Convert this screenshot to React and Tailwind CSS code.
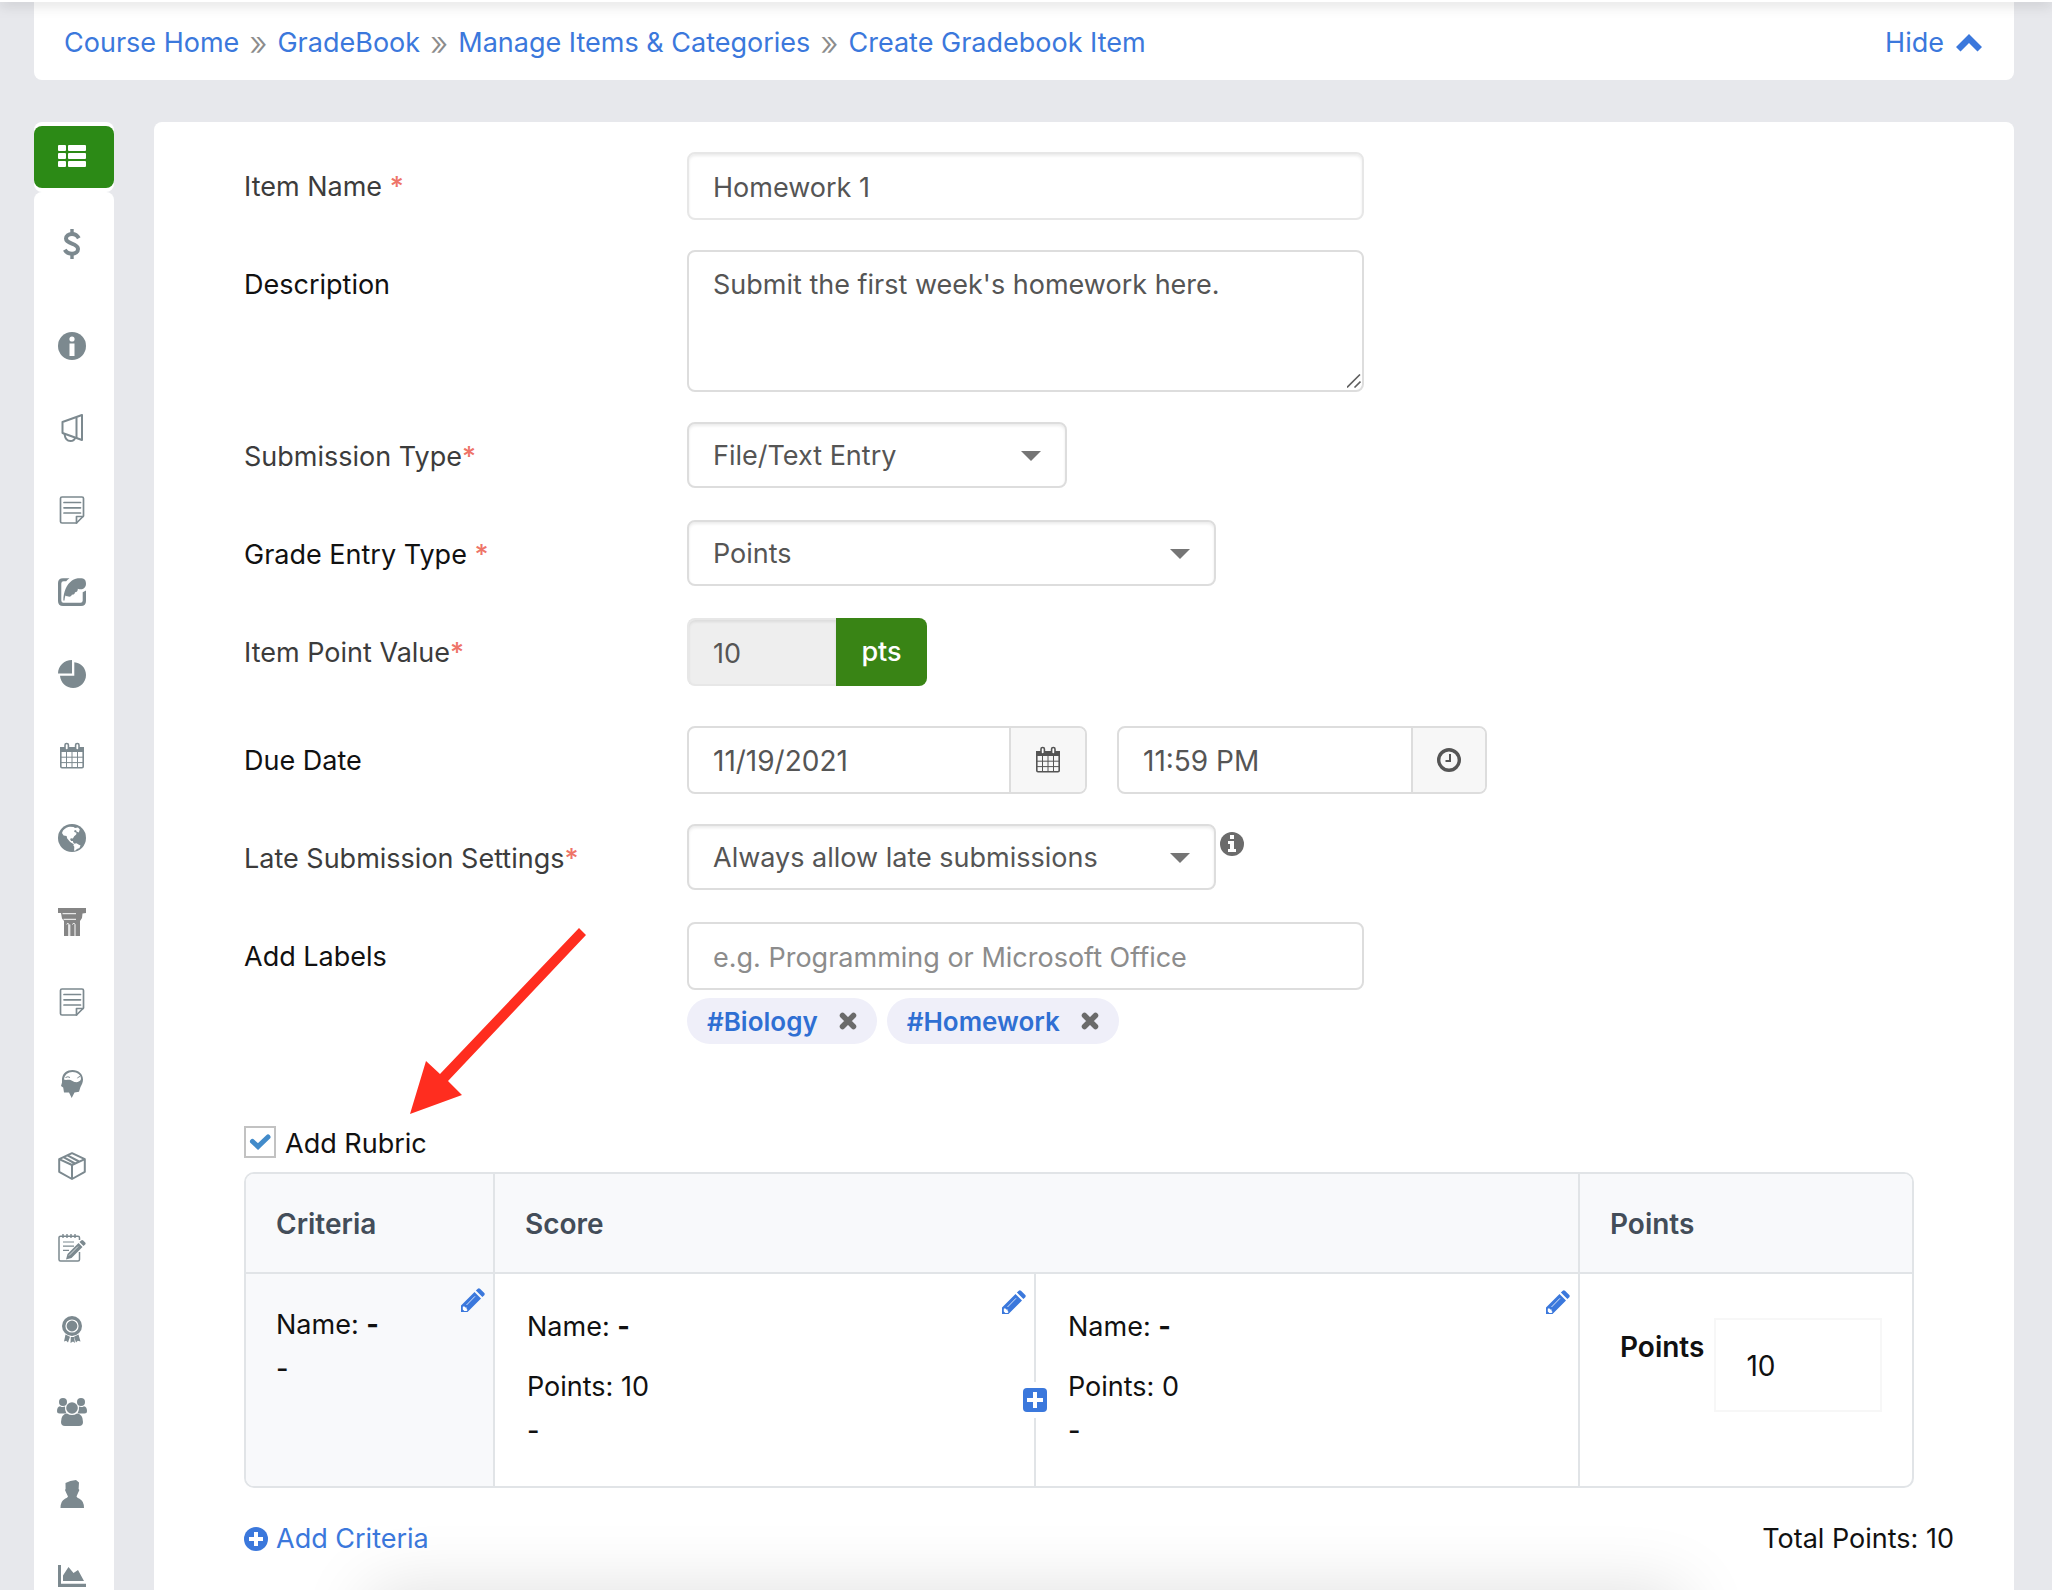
/* Iconos de la barra lateral, todos en una caja de 28x28 */
function GridIcon() {
  return (
    <svg viewBox="0 0 28 24" className="h-6 w-7 fill-white">
      <rect x="0" y="0" width="8" height="6" rx="1" />
      <rect x="10" y="0" width="18" height="6" rx="1" />
      <rect x="0" y="8" width="8" height="6" rx="1" />
      <rect x="10" y="8" width="18" height="6" rx="1" />
      <rect x="0" y="16" width="8" height="6" rx="1" />
      <rect x="10" y="16" width="18" height="6" rx="1" />
    </svg>
  );
}

function DollarIcon() {
  return (
    <svg viewBox="0 0 28 30" className="h-[30px] w-7" fill="none" stroke="currentColor" strokeWidth="4">
      <path d="M14 0v5M14 25v5" strokeWidth="3.400" />
      <path d="M20.800 9.200C19.400 6.600 17 5 14 5c-3.600 0-6 1.800-6 4.600 0 6 12 4 12 10.400 0 3-2.600 4.800-6 4.800-3.200 0-5.800-1.400-7.200-4" />
    </svg>
  );
}

function InfoIcon() {
  return (
    <svg viewBox="0 0 28 28" className="size-7" fill="currentColor">
      <circle cx="14" cy="14" r="14" />
      <circle cx="14" cy="7" r="2.600" fill="#fff" />
      <path d="M11.500 11.500h5v12.500h-5z" fill="#fff" />
    </svg>
  );
}

function MegaphoneIcon() {
  return (
    <svg viewBox="0 0 28 28" className="size-7" fill="none" stroke="currentColor" strokeWidth="2" strokeLinejoin="round">
      <path d="M24 1v25L4.500 19V8z" />
      <path d="M18.500 3.400v20.600" />
      <path d="M6.500 19.800c.6 4.600 2.600 7.200 6 7.200 2.600 0 4.200-1.400 4.900-3.500" />
    </svg>
  );
}

function NoteIcon() {
  return (
    <svg viewBox="0 0 28 28" className="size-7" fill="none" stroke="currentColor" strokeWidth="1.700" strokeLinejoin="round" strokeLinecap="round">
      <path d="M4 1h20q1.500 0 1.500 1.500V20l-7 7H4q-1.500 0-1.500-1.500v-23Q2.500 1 4 1z" />
      <path d="M25 20.500h-6.500V27" />
      <path d="M6 6.500h16.500M6 11.800h16.500M6 17h16.500" />
    </svg>
  );
}

function QuillIcon() {
  return (
    <svg viewBox="0 0 28 28" className="size-7" fill="currentColor">
      <path d="M11.500.3C10 1.200 9 2.200 8.200 3.300H5.500Q3.300 3.300 3.300 5.500v17Q3.300 24.700 5.500 24.700h17q2.200 0 2.200-2.200v-8.300l3.300-1.700V23q0 5-5 5H5q-5 0-5-5V5Q0 .3 5 .3z" />
      <path d="M5.300 22.500C5.500 14 8.500 6.500 14 2.500 17 .4 21 0 25 .5c2 .6 3 2.500 3 5.500 0 2.500-1.500 4.500-4 5.200-1.500.3-3 0-4.200-.5.2 2-.8 3.300-2.800 3.500-.2 1.800-1.200 2.600-3 2.400-.4 1.600-2 2.600-4.500 1.700-1 0-1.500-.6-2-.8-.7 1.500-.8 3.500-1 5z" />
    </svg>
  );
}

function PieIcon() {
  return (
    <svg viewBox="0 0 28 28" className="size-7" fill="currentColor">
      <path d="M14 0v13.500H0C0 6 6 0 14 0z" />
      <path d="M16.300 2.200C23 2.800 28 8 28 15c0 7.200-5.800 13-12.800 13C8.200 28 2.500 22.800 2 15.800h14.300z" />
    </svg>
  );
}

function CalendarIcon() {
  return (
    <svg viewBox="0 0 28 28" className="size-7" fill="none" stroke="currentColor">
      <rect x="2.800" y="5.800" width="22.400" height="20" rx="1.200" strokeWidth="1.600" />
      <path d="M2 5h24v5H2z" fill="currentColor" stroke="none" />
      <rect x="7" y="1.500" width="3.400" height="6.500" rx="1.600" fill="#fff" strokeWidth="1.600" />
      <rect x="17.600" y="1.500" width="3.400" height="6.500" rx="1.600" fill="#fff" strokeWidth="1.600" />
      <path d="M8.500 10v16M14 10v16M19.500 10v16M3 15.200h22M3 20.600h22" />
    </svg>
  );
}

function GlobeIcon() {
  return (
    <svg viewBox="0 0 28 28" className="size-7" fill="currentColor">
      <circle cx="14" cy="14" r="14" />
      <path fill="#fff" d="M5 6.500C7 4.200 9.800 3 12 2.800l3.500.2 1.500 1 3-.6 1.800 2.200-1 3-2.300-1-.5-1.500-2 .6.500 1.300 2 .8-.3 1.800-2 1.600-1.300 2.300-2-.2-.8 1 1 1.600 1.700.1.600 1.800 1 1.300-1-.1-3.200-2-3-3.500-.6-2.500-3-.6L4 9z" />
      <path fill="#fff" d="M16 19.800l2.500-.6 2 1.200 2 1-1 2.500-2.500 1-2.200 2-.7-.6.200-3.500-1-1.500z" />
    </svg>
  );
}

function PillarIcon() {
  return (
    <svg viewBox="0 0 28 28" className="size-7 text-[#858585]" fill="currentColor">
      <path d="M0 0h28v5l-3.500.5L24 10l-2 3v15H6V13l-2-2.500L3 5H0z" />
      <path d="M4.500 5.700H18M5.500 11.300H18M10.800 28V16.500c0-1.400-2-1.400-2 0M11.800 28V16.500M17 28V16.500c0-1.400-2.500-1.400-2.500 0" fill="none" stroke="#fff" />
    </svg>
  );
}

function HeadIcon() {
  return (
    <svg viewBox="0 0 28 28" className="size-7" fill="currentColor">
      <path d="M4 9C4.500 3 9 0 14.500 0 20.500 0 25 4 25 9.500c0 3-1.200 5-2.500 7.500l-1.500 4.800-4.500.8-2.800 5.400-2.700-5.500H6l-.8-5L3 16l1-3.500z" />
      <path fill="#fff" d="M6 9.500C6.300 5 10 2 14.500 2c5 0 8.500 3 8.500 7-.7 2.600-3.500 3.500-6.500 3-1.500-.4-2.500-1.600-4-2-2.500-.8-4.300.6-6.500-.5z" />
      <path d="M7.500 7.500q2.500-1.500 4.500 0M22 6.500q-2 .2-2.500 1.800" fill="none" stroke="currentColor" />
    </svg>
  );
}

function CubeIcon() {
  return (
    <svg viewBox="0 0 28 28" className="size-7" fill="none" stroke="currentColor" strokeWidth="2" strokeLinejoin="round">
      <path d="M14 1.200l12.800 6v12.600L14 27 1.200 19.800V7.200z" />
      <path d="M1.200 7.200L14 13l12.800-5.800M14 13v14M9.500 3.300L21 9.500M5.500 5.200L17 11.500" />
    </svg>
  );
}

function NotepadIcon() {
  return (
    <svg viewBox="0 0 28 28" className="size-7" fill="none" stroke="currentColor">
      <path d="M21.500 18v7.500q0 1.500-1.500 1.500H2.500Q1 27 1 25.500v-22Q1 2.200 2.500 2.200h17.500q1.500 0 1.500 1.500V6" strokeWidth="1.500" />
      <path d="M5 0v4M9 0v4M13 0v4M17 0v4" strokeWidth="1.400" />
      <path d="M5 8h11M5 12.200h11M5 16.400h6" strokeWidth="1.200" />
      <path d="M8 25.500l1.500-5.500L20.500 9l4 4-11 11zM21.500 8l1.700-1.600q1-.8 2 .2l2 2q.9 1 0 2L25.500 12z" fill="currentColor" stroke="none" />
      <path d="M11 21.500l9-9" stroke="#fff" strokeWidth=".7" />
    </svg>
  );
}

function AwardIcon() {
  return (
    <svg viewBox="0 0 28 28" className="size-7" fill="currentColor">
      <circle cx="14" cy="10" r="10" />
      <circle cx="14" cy="10" r="6" fill="none" stroke="#fff" strokeWidth="1.200" />
      <path d="M7.500 18.500l4.500 2.300-2 5.700-1.800-1.800L6 25.500zM20.500 18.500L16 20.800l2 5.700 1.800-1.800 2.700.8zM12.800 21h3.200l1 6-2-1.500L12.500 27z" />
    </svg>
  );
}

function UsersIcon() {
  return (
    <svg viewBox="0 0 30 28" className="h-7 w-[30px]" fill="currentColor">
      <circle cx="6" cy="4" r="4" />
      <circle cx="24" cy="4" r="4" />
      <circle cx="15" cy="10" r="5.800" />
      <path d="M3 8.200q2.500 1.500 5 .4-.4 4 1.500 6.900H2.500Q0 15.500 0 13q0-4 3-4.800zM27 8.200q-2.500 1.500-5 .4.400 4-1.500 6.900h7Q30 15.500 30 13q0-4-3-4.800z" />
      <path d="M10 15.500q5 3 10 0 6 .5 6 8.500 0 4-4 4H8q-4 0-4-4 0-8 6-8.500z" />
    </svg>
  );
}

function PersonIcon() {
  return (
    <svg viewBox="0 0 28 28" className="size-7" fill="currentColor">
      <path d="M7.500 3Q12 .5 18 0l3 2.500-.4 6.500.8 1-1.400 3-1.500 3.500q.5 1.500 3 2.300Q26 21 26 28H2.500q0-7 4.500-9.200 2.500-1 3-2.300L8.300 13 7 10l.6-1z" />
    </svg>
  );
}

function ChartIcon() {
  return (
    <svg viewBox="0 0 28 22" className="h-[22px] w-7" fill="currentColor">
      <path d="M0 0h3v18.800h25V22H0zM5 16V10.500L10.500 2l5 6 4.500-3 6 11z" />
    </svg>
  );
}

/* Iconos del formulario */
function PencilIcon() {
  return (
    <svg viewBox="0 0 24 24" className="size-6 fill-[#3b78dc]">
      <path d="M0 24v-6.500L13.500 4l6.500 6.500L6.500 24zM14.900 2.600l1.900-1.900q1-.9 2.200 0l4.300 4.300q.9 1 0 2.200l-1.900 1.900z" />
      <path d="M1.800 18.800l1.300-.6 1.300 1.400h1.200v1.400l1 1-1 1H3.300L1.800 21.500z" fill="#fff" />
      <path d="M5.500 17L14 8.300" stroke="#fff" strokeWidth=".8" />
    </svg>
  );
}

function ClockIcon() {
  return (
    <svg viewBox="0 0 24 24" className="size-6" fill="none" stroke="#555555">
      <circle cx="12" cy="12" r="10.300" strokeWidth="3.400" />
      <path d="M13 6v7H8.500" strokeWidth="2" />
    </svg>
  );
}

function CloseIcon() {
  return (
    <svg viewBox="0 0 18 18" className="size-[18px]" stroke="#6b6b6b" strokeWidth="5.500" strokeLinecap="round">
      <path d="M3.500 3.500l11 11M14.500 3.500l-11 11" />
    </svg>
  );
}

const navItems = [
  { label: "Billing", Icon: DollarIcon, box: "mb-[10px] h-[103px] items-center" },
  { label: "Information", Icon: InfoIcon, box: "h-[82px] items-center" },
  { label: "Announcements", Icon: MegaphoneIcon, box: "h-[82px] items-center" },
  { label: "Syllabus", Icon: NoteIcon, box: "h-[82px] items-center" },
  { label: "Assignments", Icon: QuillIcon, box: "h-[82px] items-center" },
  { label: "GradeBook", Icon: PieIcon, box: "h-[82px] items-center" },
  { label: "Calendar", Icon: CalendarIcon, box: "h-[82px] items-center" },
  { label: "Web", Icon: GlobeIcon, box: "h-[82px] items-center" },
  { label: "Library", Icon: PillarIcon, box: "h-[82px] items-center pt-1" },
  { label: "Notes", Icon: NoteIcon, box: "h-[82px] items-center" },
  { label: "Learning", Icon: HeadIcon, box: "h-[82px] items-center" },
  { label: "Resources", Icon: CubeIcon, box: "h-[82px] items-center" },
  { label: "Tests", Icon: NotepadIcon, box: "h-[82px] items-center" },
  { label: "Badges", Icon: AwardIcon, box: "h-[82px] items-center" },
  { label: "Groups", Icon: UsersIcon, box: "h-[82px] items-center" },
  { label: "Roster", Icon: PersonIcon, box: "h-[82px] items-center" },
  { label: "Reports", Icon: ChartIcon, box: "h-[54px] items-end pb-[2px]" },
];

const crumbs = ["Course Home", "GradeBook", "Manage Items & Categories", "Create Gradebook Item"];

function Row({ id, label, required, dark, children }) {
  return (
    <div className="flex items-start">
      <label
        htmlFor={id}
        className={`flex h-[68px] w-[443px] shrink-0 items-center pt-[2px] whitespace-pre ${
          required && !dark ? "text-[#3c3c3c]" : "text-[#111111]"
        }`}
      >
        {label}
        {required && <span className="font-medium text-[#ee7468]">*</span>}
      </label>
      {children}
    </div>
  );
}

function Select({ id, value, className }) {
  return (
    <div className={`relative ${className}`}>
      <select
        id={id}
        className="block h-[66px] w-full appearance-none rounded-lg border-2 border-[#dddddd] bg-white px-6 pt-[2px] text-[#555555] shadow-[inset_0_2px_3px_rgba(0,0,0,0.08)]"
      >
        <option>{value}</option>
      </select>
      <svg viewBox="0 0 20 10" className="pointer-events-none absolute top-[29px] right-[26px] h-[10px] w-5 fill-[#757575]">
        <path d="M0 0h20L10 10z" />
      </svg>
    </div>
  );
}

function Tag({ text }) {
  return (
    <span className="flex h-[46px] items-center gap-[21px] rounded-full bg-[#efeff9] px-5 text-[26px] font-semibold text-[#2f6fd3]">
      {text}
      <button type="button" aria-label={`Remove ${text}`}>
        <CloseIcon />
      </button>
    </span>
  );
}

function ScoreCell({ points }) {
  return (
    <div className="relative min-h-[212px] pt-8 pl-8">
      <p className="h-[60px] leading-[42px]">
        Name: <b>-</b>
      </p>
      <p className="h-[45px] leading-[42px]">Points: {points}</p>
      <p className="leading-10 font-medium">-</p>
      <button type="button" aria-label="Edit score" className="absolute top-4 right-2">
        <PencilIcon />
      </button>
    </div>
  );
}

export default function App() {
  return (
    <div className="relative flex min-h-screen flex-col overflow-hidden bg-[#e7e8ec] font-['Inter',sans-serif] text-[27px] text-[#111111]">
      <div className="absolute inset-x-0 top-0 z-10 h-[2px] bg-white shadow-[0_0_14px_rgba(0,0,0,0.6)]" />

      {/* Migas de pan */}
      <header className="mr-[38px] ml-[34px] flex h-20 items-center justify-between rounded-b-lg bg-white pt-[6px] pr-8 pl-[30px]">
        <nav className="flex items-center text-[#3b78dc]">
          {crumbs.map((crumb, i) => (
            <span key={crumb} className="flex items-center">
              {i > 0 && <span className="mx-[10px] text-[34px] leading-9 font-light text-[#8c8c8c]">»</span>}
              <a href="#">{crumb}</a>
            </span>
          ))}
        </nav>
        <button type="button" className="flex items-center gap-3 text-[#3b78dc]">
          Hide
          <svg viewBox="0 0 26 18" className="h-[18px] w-[26px] fill-[#3b78dc]">
            <path d="M13 0l13 13-4.500 4.500L13 9l-8.500 8.500L0 13z" />
          </svg>
        </button>
      </header>

      <div className="mt-[42px] mr-[38px] ml-[34px] flex flex-1 gap-10">
        {/* Barra lateral */}
        <aside className="flex w-20 shrink-0 flex-col">
          <div className="rounded-lg bg-white py-1">
            <a href="#" aria-label="Menu" className="flex h-[62px] items-center justify-center rounded-lg bg-[#2c8a16] pr-1">
              <GridIcon />
            </a>
          </div>
          <nav className="flex flex-1 flex-col rounded-t-lg bg-white text-[#7c898f]">
            {navItems.map(({ label, Icon, box }) => (
              <a key={label} href="#" aria-label={label} className={`flex w-full shrink-0 justify-center pr-1 ${box}`}>
                <Icon />
              </a>
            ))}
          </nav>
        </aside>

        {/* Formulario */}
        <main className="min-w-0 flex-1 rounded-t-lg bg-white pt-[30px] pr-[60px] pl-[90px]">
          <form className="flex flex-col gap-[30px]">
            <Row id="name" label="Item Name " required>
              <input
                id="name"
                defaultValue="Homework 1"
                className="h-[68px] w-[677px] rounded-lg border-2 border-[#e7e7e7] px-6 pt-[2px] text-[#555555] shadow-[inset_0_2px_3px_rgba(0,0,0,0.08)]"
              />
            </Row>
            <Row id="description" label="Description">
              <div className="relative">
                <textarea
                  id="description"
                  defaultValue="Submit the first week's homework here."
                  className="block h-[142px] w-[677px] resize-none rounded-lg border-2 border-[#dddddd] px-6 py-3 leading-[42px] text-[#555555]"
                />
                <svg
                  viewBox="0 0 14 14"
                  className="pointer-events-none absolute right-[3px] bottom-1 size-[14px]"
                  fill="none"
                  stroke="#5f5f5f"
                  strokeWidth="1.600"
                >
                  <path d="M0 13.500L13 .5M7.500 13.500l6-6" />
                </svg>
              </div>
            </Row>
            <Row id="submission" label="Submission Type" required>
              <Select id="submission" value="File/Text Entry" className="w-[380px]" />
            </Row>
            <Row id="grade" label="Grade Entry Type " required dark>
              <Select id="grade" value="Points" className="w-[529px]" />
            </Row>
            <Row id="points" label="Item Point Value" required>
              <div className="mb-[10px] flex">
                <input
                  id="points"
                  defaultValue="10"
                  disabled
                  className="h-[68px] w-[149px] rounded-l-lg border-2 border-r-0 border-[#e7e7e7] bg-[#eeeeee] px-6 pt-[2px] text-[#555555] shadow-[inset_0_2px_3px_rgba(0,0,0,0.08)]"
                />
                <span className="flex h-[68px] w-[91px] items-center justify-center rounded-r-lg bg-[#398415] font-medium text-white">
                  pts
                </span>
              </div>
            </Row>
            <Row id="date" label="Due Date">
              <div className="flex gap-[30px] text-[28px]">
                <div className="flex h-[68px] w-[400px] overflow-hidden rounded-lg border-2 border-[#dddddd]">
                  <input id="date" defaultValue="11/19/2021" className="min-w-0 flex-1 px-6 pt-[2px] text-[#555555]" />
                  <button
                    type="button"
                    aria-label="Pick date"
                    className="flex w-[76px] items-center justify-center border-l-2 border-[#dddddd] bg-[#f7f7f7] text-[#555555]"
                  >
                    <CalendarIcon />
                  </button>
                </div>
                <div className="flex h-[68px] w-[370px] overflow-hidden rounded-lg border-2 border-[#dddddd]">
                  <input
                    aria-label="Due time"
                    defaultValue="11:59 PM"
                    className="min-w-0 flex-1 px-6 pt-[2px] text-[#555555]"
                  />
                  <button
                    type="button"
                    aria-label="Pick time"
                    className="flex w-[74px] items-center justify-center border-l-2 border-[#dddddd] bg-[#f7f7f7]"
                  >
                    <ClockIcon />
                  </button>
                </div>
              </div>
            </Row>
            <Row id="late" label="Late Submission Settings" required>
              <Select id="late" value="Always allow late submissions" className="w-[529px]" />
              <svg viewBox="0 0 24 24" className="mt-2 ml-1 size-6 fill-[#6b6b6b]">
                <circle cx="12" cy="12" r="12" />
                <path d="M10 3h4v4h-4zM8 9h6v8h2v3H8v-3h2v-5H8z" fill="#fff" />
              </svg>
            </Row>
            <Row id="labels" label="Add Labels">
              <div>
                <input
                  id="labels"
                  placeholder="e.g. Programming or Microsoft Office"
                  className="block h-[68px] w-[677px] rounded-lg border-2 border-[#dddddd] px-6 pt-[2px] text-[#555555] placeholder:text-[#8c8c8c]"
                />
                <div className="mt-2 flex gap-[10px]">
                  <Tag text="#Biology" />
                  <Tag text="#Homework" />
                </div>
              </div>
            </Row>
          </form>

          {/* Rúbrica */}
          <label className="relative mt-20 flex h-9 w-fit items-center gap-[9px]">
            <input
              type="checkbox"
              defaultChecked
              className="peer size-8 appearance-none border-2 border-[#c2c2c2] bg-white"
            />
            <svg
              viewBox="0 0 32 32"
              className="pointer-events-none absolute left-0 size-8 opacity-0 peer-checked:opacity-100"
              fill="none"
              stroke="#428bca"
              strokeWidth="5"
              strokeLinecap="round"
            >
              <path d="M8.500 15.500l5.500 5L24 11" />
            </svg>
            <span className="pt-1">Add Rubric</span>
            <svg
              viewBox="0 0 176 186"
              className="pointer-events-none absolute -top-[196px] left-[166px] h-[186px] w-[176px] fill-[#ff2d1f]"
            >
              <path d="M169 0l7 7-138 146 14 14L0 186l16-53 14 13z" />
            </svg>
          </label>

          <div className="mt-3 mr-10 overflow-hidden rounded-[10px] border-2 border-[#e1e4e7]">
            <table className="w-full table-fixed border-collapse text-left">
              <colgroup>
                <col className="w-[248px]" />
                <col className="w-[541px]" />
                <col />
                <col className="w-[333px]" />
              </colgroup>
              <thead className="bg-[#f8f9fb] text-[28px] text-[#434d59]">
                <tr className="h-[99px] border-b-2 border-[#e1e4e7]">
                  <th className="border-r-2 border-[#e1e4e7] pt-[2px] pl-[30px] font-semibold">Criteria</th>
                  <th colSpan={2} className="border-r-2 border-[#e1e4e7] pt-[2px] pl-[30px] font-semibold">
                    Score
                  </th>
                  <th className="pt-[2px] pl-[30px] font-semibold">Points</th>
                </tr>
              </thead>
              <tbody>
                <tr className="align-top">
                  <td className="relative border-r-2 border-[#e1e4e7] bg-[#f8f9fb] pt-[30px] pl-[30px]">
                    <p className="h-[45px] leading-[42px]">
                      Name: <b>-</b>
                    </p>
                    <p className="leading-10 font-medium">-</p>
                    <button type="button" aria-label="Edit criteria" className="absolute top-[14px] right-2">
                      <PencilIcon />
                    </button>
                  </td>
                  <td className="relative border-r-2 border-[#e1e4e7]">
                    <ScoreCell points={10} />
                    <button
                      type="button"
                      aria-label="Add score"
                      className="absolute top-[108px] -right-[13px] z-10 bg-white py-[6px]"
                    >
                      <svg viewBox="0 0 24 24" className="size-6">
                        <rect width="24" height="24" rx="4" fill="#3b78dc" />
                        <path d="M12 4v16M4 12h16" stroke="#fff" strokeWidth="4" />
                      </svg>
                    </button>
                  </td>
                  <td className="border-r-2 border-[#e1e4e7]">
                    <ScoreCell points={0} />
                  </td>
                  <td className="pt-11 pl-10">
                    <div className="flex gap-[10px] text-[28px]">
                      <label htmlFor="rubric-points" className="pt-2 font-semibold">
                        Points
                      </label>
                      <input
                        id="rubric-points"
                        defaultValue="10"
                        className="h-[94px] w-[168px] border-2 border-[#f7f7f7] px-[30px] pt-[2px]"
                      />
                    </div>
                  </td>
                </tr>
              </tbody>
            </table>
          </div>

          <div className="mt-[31px] flex items-center justify-between">
            <button type="button" className="flex items-center gap-2 text-[#3b78dc]">
              <svg viewBox="0 0 24 24" className="size-6">
                <circle cx="12" cy="12" r="12" fill="#3b78dc" />
                <path d="M12 5v14M5 12h14" stroke="#fff" strokeWidth="4" />
              </svg>
              Add Criteria
            </button>
            <p>Total Points: 10</p>
          </div>
        </main>
      </div>

      {/* Sombra de la barra inferior */}
      <div className="pointer-events-none absolute right-[18%] -bottom-[100px] left-[18%] h-[100px] shadow-[0_0_70px_rgba(0,0,0,0.13)]" />
    </div>
  );
}
